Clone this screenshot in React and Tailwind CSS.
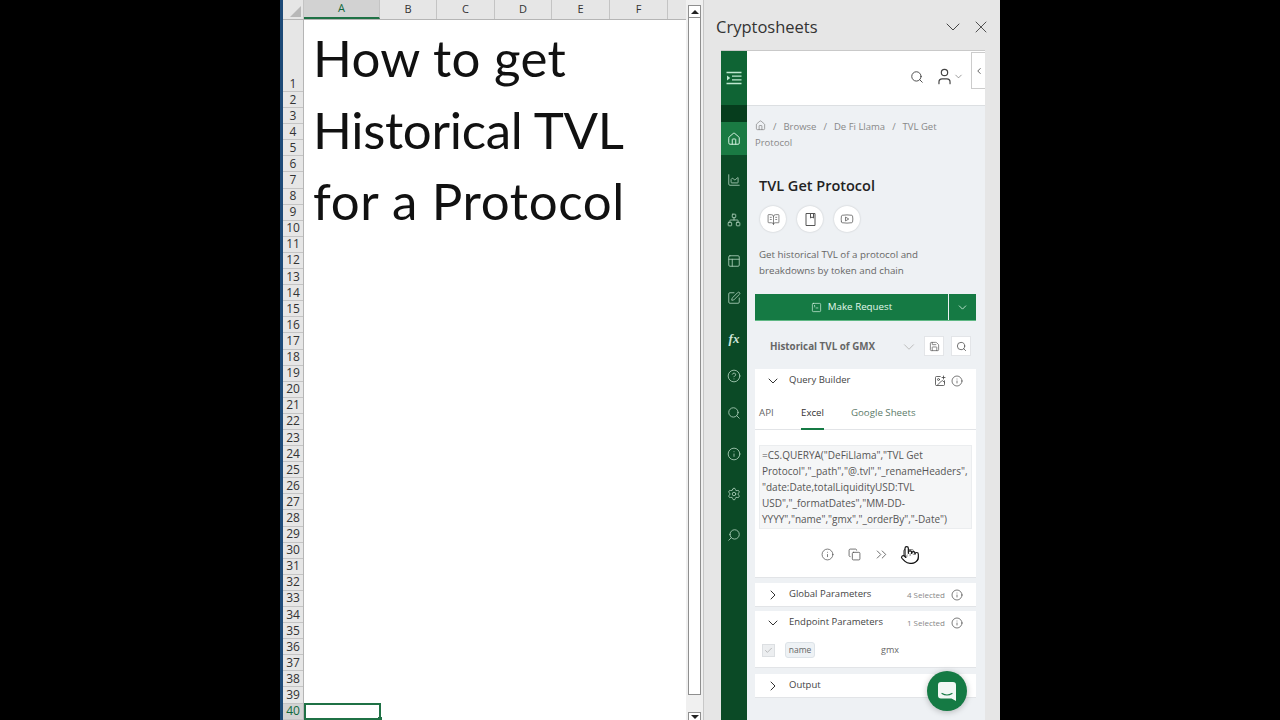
import { Search, User, ChevronDown, ChevronLeft, ChevronRight, X, House, ChartArea, Network, PanelsTopLeft, SquarePen, CircleHelp, Info, Settings, BookOpenText, Youtube, SquareTerminal, Save, Copy, ChevronsRight, Columns3, Pointer, Check, ImagePlus } from "lucide-react";

const columns = [
  { name: "A", width: "w-[76px]", active: true },
  { name: "B", width: "w-[57px]" },
  { name: "C", width: "w-[58px]" },
  { name: "D", width: "w-[57px]" },
  { name: "E", width: "w-[58px]" },
  { name: "F", width: "w-[58px]" },
];

const rows = Array.from({ length: 39 }, (_, i) => i + 2);

function Spreadsheet() {
  return (
    <div className="relative w-[403px] h-full flex flex-col bg-white shrink-0">
      <div className="flex h-[20px] bg-[#e6e6e6] border-b border-[#b5b5b5] shrink-0">
        <div className="w-[21px] border-r border-[#c4c4c4] flex items-end justify-end p-[2px]">
          <div className="w-0 h-0 border-l-[11px] border-l-transparent border-b-[11px] border-b-[#b8b8b8]" />
        </div>
        {columns.map((col) => (
          <div key={col.name} className={`${col.width} flex items-center justify-center text-[11px] border-r border-[#c4c4c4] ${col.active ? "bg-[#d2d2d2] text-[#11683c] border-b-2 border-b-[#1f7145]" : "text-[#333]"}`}>
            {col.name}
          </div>
        ))}
        <div className="flex-1" />
      </div>
      <div className="flex flex-1 min-h-0">
        <div className="w-[21px] bg-[#e6e6e6] border-r border-[#b5b5b5] flex flex-col shrink-0 text-[12px] text-[#333] leading-none">
          <div className="h-[72px] flex items-end justify-center pb-[1px] border-b border-[#c4c4c4] shrink-0">1</div>
          {rows.map((n) => (
            <div key={n} className={`h-[16.1px] shrink-0 flex items-center justify-center border-b border-[#c4c4c4] ${n === 40 ? "bg-[#d2d2d2] text-[#11683c]" : ""}`}>
              {n}
            </div>
          ))}
        </div>
        <div className="flex-1" />
      </div>
      {/* big text sits over the cells like in the sheet */}
      <div className="absolute left-[30px] top-[22px] font-['Lato',sans-serif] text-[51px] leading-[71.5px] text-[#111] whitespace-nowrap">
        <div className="tracking-[0.3px]">How to get</div>
        <div className="tracking-[-0.3px]">Historical TVL</div>
        <div className="tracking-[0.65px]">for a Protocol</div>
      </div>
      <div className="absolute left-[21px] top-[703px] w-[77px] h-[17px] border-2 border-[#1f7145]" />
      <div className="absolute left-[95px] top-[717px] w-[4px] h-[3px] bg-[#1f7145]" />
    </div>
  );
}

function ScrollBar() {
  return (
    <div className="w-[18px] h-full bg-[#f0f0f0] pt-[5px] px-[2px] flex flex-col shrink-0 border-r border-[#c8c8c8]">
      <div className="h-[13px] bg-white border border-[#8f8f8f] flex items-center justify-center shrink-0">
        <div className="w-0 h-0 border-x-[4px] border-x-transparent border-b-[4px] border-b-[#222]" />
      </div>
      <div className="h-[677px] bg-white border border-[#8f8f8f] border-t-0 shrink-0" />
      <div className="mt-[17px] h-[10px] bg-white border border-[#8f8f8f] flex items-start justify-center pt-[2px] shrink-0">
        <div className="w-0 h-0 border-x-[4px] border-x-transparent border-t-[4px] border-t-[#222]" />
      </div>
    </div>
  );
}

function IndentIcon() {
  return (
    <svg width="16" height="14" viewBox="0 0 16 14" fill="none" stroke="#bfe8d0" strokeWidth="1.3">
      <path d="M0.5 1.5h15M6 5.2h9.5M6 8.8h9.5M0.5 12.5h15" />
      <path d="M1 4.6v4.8l3.2-2.4z" fill="#bfe8d0" stroke="none" />
    </svg>
  );
}

function BookmarkTab() {
  return (
    <svg width="11" height="13" viewBox="0 0 11 13" fill="none" stroke="#555" strokeWidth="1">
      <path d="M1 .5h9v12H1zM5.5.5v4.5l1.5-1 1.5 1V.5" />
    </svg>
  );
}

const navItems = [
  { Icon: ChartArea, gap: "mt-[15px]" },
  { Icon: Network, gap: "mt-[20px]" },
  { Icon: PanelsTopLeft, gap: "mt-[21px]" },
  { Icon: SquarePen, gap: "mt-[17px]" },
  { fx: true, gap: "mt-[21px]" },
  { Icon: CircleHelp, gap: "mt-[17px]" },
  { Icon: Search, gap: "mt-[17px]" },
  { Icon: Info, gap: "mt-[21px]" },
  { Icon: Settings, gap: "mt-[20px]" },
  { Icon: Search, gap: "mt-[21px]", flip: true },
];

function Sidebar() {
  return (
    <div className="w-[26px] bg-[#0b4a26] flex flex-col shrink-0">
      <div className="h-[54px] bg-[#0f6434] flex items-center justify-center shrink-0">
        <IndentIcon />
      </div>
      <div className="h-[17px] bg-[#063d1d] shrink-0" />
      <div className="h-[33px] bg-[#1a7a43] flex items-center justify-center shrink-0">
        <House size={14} color="#d5f2e0" strokeWidth={1.7} />
      </div>
      {navItems.map((item, i) => (
        <div key={i} className={`${item.gap} h-[20px] shrink-0 flex items-center justify-center`}>
          {item.fx ? (
            <span className="font-['Liberation_Serif',serif] italic font-bold text-[13px] text-[#cfe6d8]">fx</span>
          ) : (
            <item.Icon size={14} color="#a8cbb6" strokeWidth={1.5} className={item.flip ? "-scale-x-100" : ""} />
          )}
        </div>
      ))}
    </div>
  );
}

function SectionRow({ open, label, count, extra }) {
  const Chevron = open ? ChevronDown : ChevronRight;
  return (
    <div className="h-[23px] flex items-center pl-[10px] pr-[13px]">
      <Chevron size={16} color="#333" strokeWidth={1.5} />
      <span className="ml-[8px] text-[9.5px] text-[#444]">{label}</span>
      <div className="flex-1" />
      {count && <span className="text-[8px] text-[#888] mr-[6px]">{count}</span>}
      {extra}
      <Info size={12} color="#444" strokeWidth={1.4} />
    </div>
  );
}

function PaneContent() {
  return (
    <div className="flex-1 min-w-0 flex flex-col bg-[#eef1f4]">
      <div className="relative h-[55px] bg-white border-b border-[#dcdfe2] flex items-center justify-end pr-[21px] pb-[3px] shrink-0">
        <Search size={14} color="#444" strokeWidth={1.6} />
        <User size={19} color="#444" strokeWidth={1.5} className="ml-[11px]" />
        <ChevronDown size={11} color="#666" strokeWidth={1.4} className="-ml-[1px]" />
        <div className="absolute right-0 top-[1px] w-[14px] h-[37px] bg-white border border-[#ccc] border-r-0 flex items-center justify-center">
          <ChevronLeft size={10} color="#444" strokeWidth={2} />
        </div>
      </div>
      <div className="flex-1 pl-[8px] pr-[9px] flex flex-col">
        <div className="pt-[13px] text-[9.5px] leading-[16px] text-[#888]">
          <House size={11} color="#777" strokeWidth={1.4} className="inline-block align-[-1px]" />
          <span className="mx-[7px]">/</span>Browse<span className="mx-[7px]">/</span>De Fi Llama<span className="mx-[7px]">/</span>TVL Get<br />Protocol
        </div>
        <h1 className="mt-[25px] ml-[4px] text-[14.5px] leading-[20px] font-semibold text-[#222]">TVL Get Protocol</h1>
        <div className="mt-[10px] ml-[5px] flex gap-[11px]">
          {[<BookOpenText key="a" size={13} color="#555" strokeWidth={1.3} />, <BookmarkTab key="b" />, <Youtube key="c" size={14} color="#555" strokeWidth={1.3} />].map((icon, i) => (
            <div key={i} className="w-[26px] h-[26px] rounded-full bg-white shadow-[0_0_2px_rgba(0,0,0,0.2)] flex items-center justify-center">
              {icon}
            </div>
          ))}
        </div>
        <p className="mt-[15px] ml-[4px] text-[9.75px] leading-[16px] text-[#666]">
          Get historical TVL of a protocol and<br />breakdowns by token and chain
        </p>
        <div className="mt-[15px] flex h-[27px] shrink-0 gap-[1px] border-b border-[#5fb884]">
          <div className="w-[193px] bg-[#157a44] flex items-center justify-center gap-[6px] text-[9.75px] font-medium text-[#e2f8eb]">
            <SquareTerminal size={11} strokeWidth={1.4} />
            Make Request
          </div>
          <div className="flex-1 bg-[#157a44] flex items-center justify-center">
            <ChevronDown size={13} color="#d8f5e4" strokeWidth={1.5} />
          </div>
        </div>
        <div className="mt-[14px] flex items-center h-[22px] shrink-0 pl-[15px] pr-[5px]">
          <span className="text-[9.8px] font-bold text-[#666] flex-1 pt-[2px]">Historical TVL of GMX</span>
          <ChevronDown size={18} color="#bbb" strokeWidth={1.3} className="mr-[6px] mt-[2px]" />
          <div className="w-[20px] h-[20px] bg-white border border-[#e3e5e8] flex items-center justify-center mr-[7px]">
            <Save size={11} color="#555" strokeWidth={1.5} />
          </div>
          <div className="w-[20px] h-[20px] bg-white border border-[#e3e5e8] flex items-center justify-center">
            <Search size={11} color="#555" strokeWidth={1.8} />
          </div>
        </div>

        <div className="mt-[12px] bg-white h-[209px] shrink-0 flex flex-col border-b border-[#e2e4e7]">
          <SectionRow open label="Query Builder" extra={<ImagePlus size={12} color="#444" strokeWidth={1.6} className="mr-[5px]" />} />
          <div className="mt-[9px] h-[29px] border-b border-[#e2e4e7] flex text-[9.7px] text-[#666]">
            <span className="ml-[4px] w-[42px] pt-[5px]">API</span>
            <span className="w-[23px] h-[29px] pt-[5px] border-b-2 border-[#157a44] text-[#333] whitespace-nowrap">Excel</span>
            <span className="ml-[27px] pt-[5px] text-[#5d7a6a]">Google Sheets</span>
          </div>
          <div className="mt-[15px] mx-[4px] h-[84px] bg-[#f5f6f7] border border-[#ebedef] px-[2px] pt-[1px] text-[10px] leading-[16px] text-[#555]">
            <div className="whitespace-nowrap">=CS.QUERYA("DeFiLlama","TVL Get</div>
            <div className="whitespace-nowrap">Protocol","_path","@.tvl","_renameHeaders",</div>
            <div className="whitespace-nowrap">"date:Date,totalLiquidityUSD:TVL</div>
            <div className="whitespace-nowrap">USD","_formatDates","MM-DD-</div>
            <div className="whitespace-nowrap">YYYY","name","gmx","_orderBy","-Date")</div>
          </div>
          <div className="relative mt-[17px] flex justify-center pl-[4px]">
            <div className="w-[27px] h-[16px] flex items-center justify-center"><Info size={13} color="#555" strokeWidth={1.4} /></div>
            <div className="w-[27px] h-[16px] flex items-center justify-center"><Copy size={13} color="#555" strokeWidth={1.5} /></div>
            <div className="w-[27px] h-[16px] flex items-center justify-center"><ChevronsRight size={17} color="#555" strokeWidth={1.2} /></div>
            <div className="w-[27px] h-[16px] flex items-center justify-center"><Columns3 size={13} color="#555" strokeWidth={1.4} /></div>
            <Pointer size={20} fill="#fff" color="#111" strokeWidth={1.4} className="absolute left-[145px] top-[-1px]" />
          </div>
        </div>

        <div className="mt-[5px] bg-white shrink-0 border-b border-[#e2e4e7]">
          <SectionRow label="Global Parameters" count="4 Selected" />
        </div>
        <div className="mt-[4px] bg-white h-[57px] shrink-0 border-b border-[#e2e4e7]">
          <SectionRow open label="Endpoint Parameters" count="1 Selected" />
          <div className="flex items-center mt-[8px] pl-[7px]">
            <div className="w-[13px] h-[13px] bg-[#eceef0] border border-[#dcdfe2] flex items-center justify-center">
              <Check size={9} color="#999" strokeWidth={1.6} />
            </div>
            <span className="ml-[10px] w-[30px] h-[16px] rounded-[3px] bg-[#eef2f5] border border-[#dde3e8] flex items-center justify-center text-[8.5px] text-[#666]">name</span>
            <span className="ml-[66px] text-[9px] text-[#666]">gmx</span>
          </div>
        </div>
        <div className="mt-[6px] bg-white shrink-0 border-b border-[#e2e4e7]">
          <SectionRow label="Output" />
        </div>
      </div>
      {/* chat launcher floats over the panel */}
      <div className="absolute left-[206px] top-[620px] w-[40px] h-[40px] rounded-full bg-[#157a44] shadow-[0_1px_6px_rgba(0,0,0,0.25)] flex items-center justify-center">
        <svg width="20" height="21" viewBox="0 0 20 21">
          <path d="M4 1h12a3 3 0 0 1 3 3v16l-4.5-2.5H4a3 3 0 0 1-3-3V4a3 3 0 0 1 3-3z" fill="#f2f7f4" />
          <path d="M5 12.5c3 1.8 7 1.8 10 0" fill="none" stroke="#157a44" strokeWidth="1.2" strokeLinecap="round" />
        </svg>
      </div>
    </div>
  );
}

function TaskPane() {
  return (
    <div className="w-[296px] h-full bg-[#e6e6e6] flex flex-col shrink-0 overflow-hidden">
      <div className="h-[50px] flex items-start pt-[15px] pl-[12px] pr-[9px] shrink-0">
        <span className="font-['Open_Sans',sans-serif] text-[16.5px] leading-[23px] text-[#333]">Cryptosheets</span>
        <div className="flex-1" />
        <ChevronDown size={24} color="#444" strokeWidth={1} />
        <X size={20} color="#444" strokeWidth={1.1} className="ml-[6px] mt-[2px]" />
      </div>
      <div className="relative flex flex-1 min-h-0 ml-[17px] mr-[15px] border-t border-[#c9c9c9] font-['Open_Sans',sans-serif]">
        <Sidebar />
        <PaneContent />
      </div>
    </div>
  );
}

export default function App() {
  return (
    <div className="w-[1280px] h-[720px] bg-black flex overflow-hidden font-['Open_Sans',sans-serif]">
      <div className="w-[280px] shrink-0" />
      <div className="w-[3px] bg-[#1d4a78] shrink-0" />
      <Spreadsheet />
      <ScrollBar />
      <TaskPane />
    </div>
  );
}
